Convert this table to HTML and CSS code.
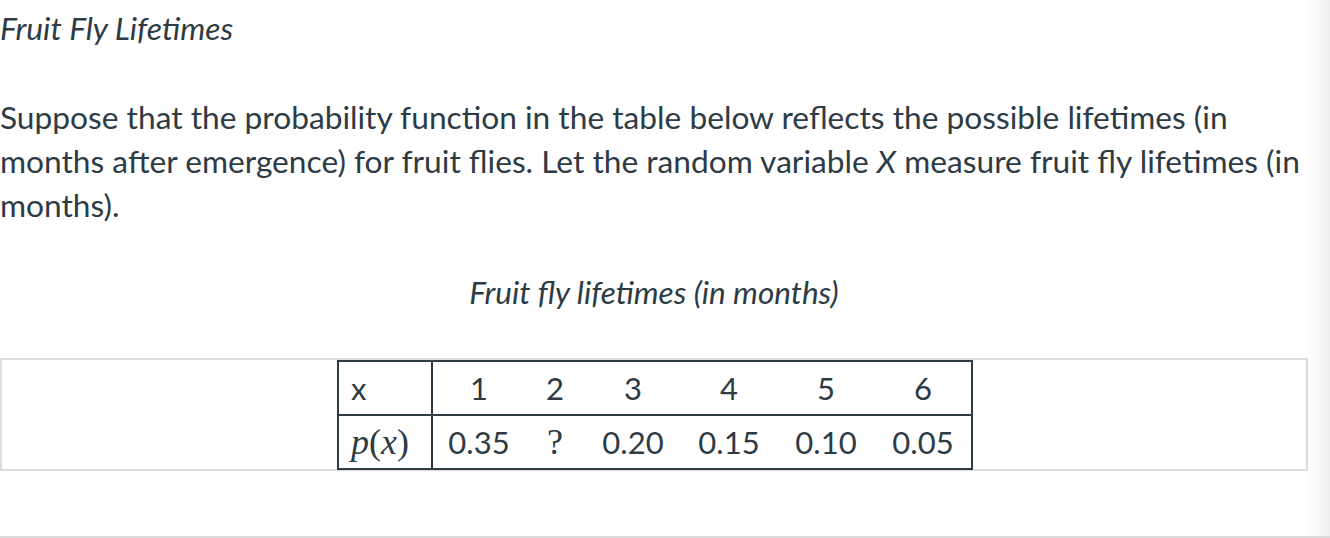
FILE: index.html
```html
<!DOCTYPE html>
<html>
<head>
<meta charset="utf-8">
<link rel="stylesheet" href="styles.css">
</head>
<body>
<div class="page">
  <main class="content">
    <h2 class="title">Fruit Fly Lifetimes</h2>
    <p class="intro">Suppose that the probability function in the table below reflects the possible lifetimes (in months after emergence) for fruit flies. Let the random variable <span class="mvar">X</span> measure fruit fly lifetimes (in months).</p>
    <p class="caption">Fruit fly lifetimes (in months)</p>
    <div class="table-box">
      <table class="prob">
        <tr class="row-top">
          <th class="head">x</th>
          <td class="c1">1</td>
          <td class="c2">2</td>
          <td class="c3">3</td>
          <td class="c4">4</td>
          <td class="c5">5</td>
          <td class="c6">6</td>
        </tr>
        <tr>
          <th class="head"><span class="math"><i>p</i>(<i>x</i>)</span></th>
          <td class="c1">0.35</td>
          <td class="c2"><span class="math">?</span></td>
          <td class="c3">0.20</td>
          <td class="c4">0.15</td>
          <td class="c5">0.10</td>
          <td class="c6">0.05</td>
        </tr>
      </table>
    </div>
  </main>
  <div class="edge"></div>
</div>
</body>
</html>
```
FILE: styles.css
```css
html, body {
  margin: 0;
  padding: 0;
  background: #fff;
}
body {
  font-family: "Lato", "Liberation Sans", sans-serif;
  color: #2d3b45;
  width: 1330px;
  height: 538px;
  overflow: hidden;
}
.page {
  display: flex;
  height: 536px;
  border-bottom: 2px solid #dcdcdc;
}
.content {
  width: 1308px;
  flex: none;
}
.edge {
  flex: 1;
  background: linear-gradient(to right, rgba(236,236,236,0) 0%, #eeeeee 100%);
}
.title {
  margin: 9px 0 0;
  font-size: 31.8px;
  font-weight: 400;
  font-style: italic;
  line-height: 38px;
}
.intro {
  margin: 48px 0 0;
  font-size: 31.7px;
  line-height: 44px;
  width: 1322px;
}
.mvar {
  font-style: italic;
}
.caption {
  margin: 43px 0 0;
  text-align: center;
  font-style: italic;
  font-size: 31.5px;
  line-height: 44px;
}
.table-box {
  margin-top: 44px;
  border: 2px solid #dcdcdc;
  display: flex;
  justify-content: center;
  height: 109px;
}
.prob {
  border-collapse: collapse;
  border: 2px solid #2d3b45;
  font-size: 31px;
  margin-left: 2px;
}
.prob th, .prob td {
  height: 52px;
  padding: 0;
  font-weight: 400;
  text-align: center;
}
.prob .head {
  width: 94px;
  text-align: left;
  padding-left: 12px;
  box-sizing: border-box;
  border-right: 2px solid #2d3b45;
}
.row-top th, .row-top td {
  border-bottom: 2px solid #2d3b45;
}
.math {
  font-family: "Liberation Serif", "DejaVu Serif", serif;
  font-size: 36px;
}
.math i {
  font-style: italic;
}
.c1 { width: 92px; }
.c2 { width: 60px; }
.c3 { width: 96px; }
.c4 { width: 96px; }
.c5 { width: 98px; }
.c6 { width: 96px; }
```
